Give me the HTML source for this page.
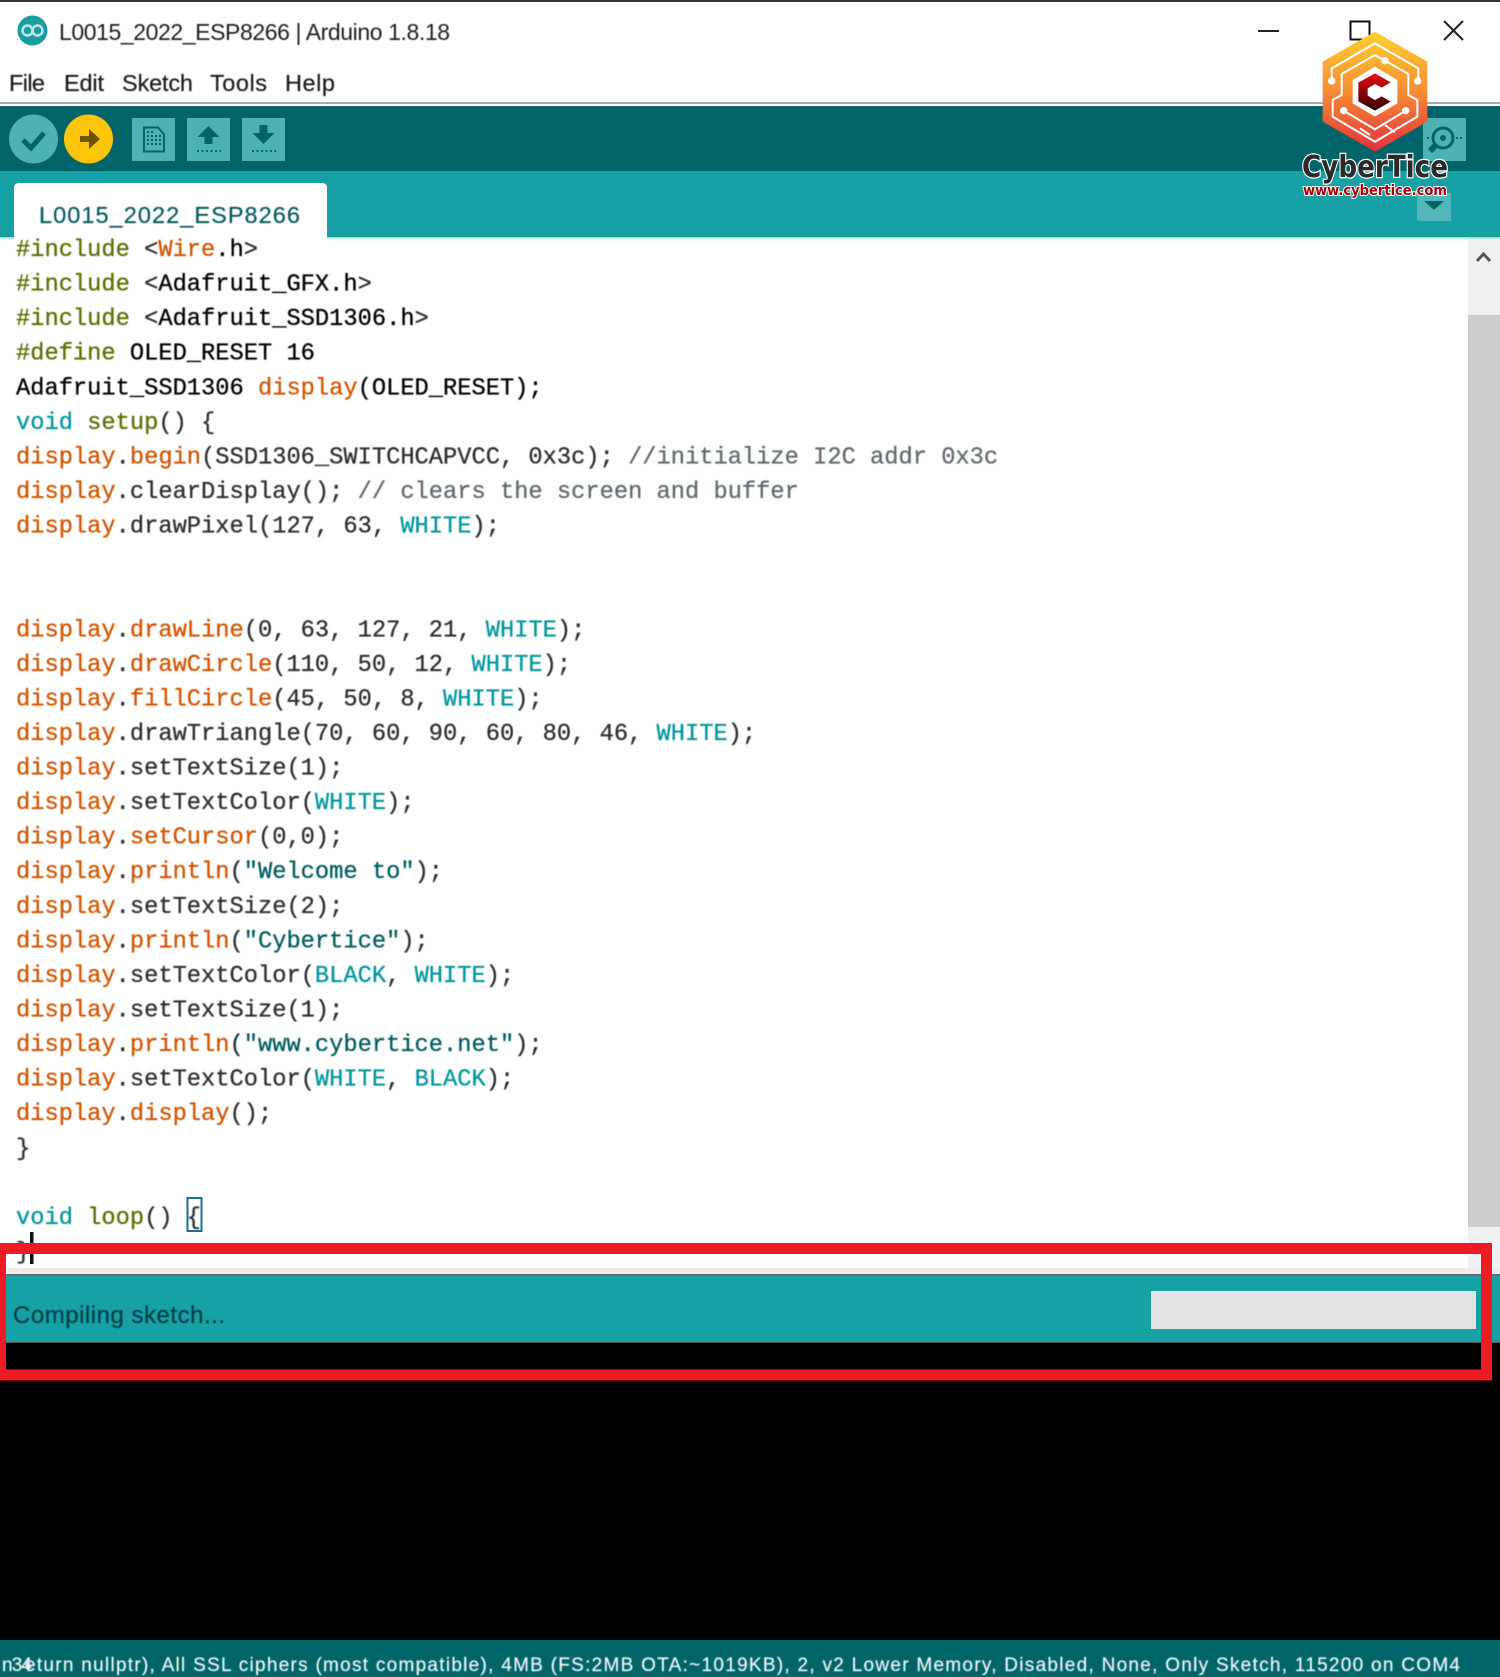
<!DOCTYPE html>
<html lang="en">
<head>
<meta charset="utf-8">
<title>L0015_2022_ESP8266 | Arduino 1.8.18</title>
<style>
html,body{margin:0;padding:0;background:#fff;width:1500px;height:1677px;overflow:hidden}
svg{display:block}
text{white-space:pre}
.s{font-family:"Liberation Sans",sans-serif}
.c{font-family:"Liberation Mono",monospace;font-size:23.72px;fill:#2b2f31;stroke:#2b2f31;stroke-width:.3px}
.o{fill:#d35400;stroke:#d35400}
.t{fill:#00979c;stroke:#00979c}
.g{fill:#5e6d03;stroke:#5e6d03}
.k{fill:#000;stroke:#000}
.q{fill:#005c5f;stroke:#005c5f}
.m{fill:#5f6b70;stroke:#5f6b70}
.soft{filter:blur(.45px)}
</style>
</head>
<body>
<svg width="1500" height="1677" viewBox="0 0 1500 1677" xmlns="http://www.w3.org/2000/svg">
<defs>
<linearGradient id="hex" x1="0" y1="0" x2="0" y2="1"><stop offset="0" stop-color="#fdd22f"/><stop offset=".5" stop-color="#f68c35"/><stop offset="1" stop-color="#e4303b"/></linearGradient>
<linearGradient id="cg" x1="0" y1="0" x2="0" y2="1"><stop offset="0" stop-color="#ee0a12"/><stop offset="1" stop-color="#2c0000"/></linearGradient>
</defs>

<rect width="1500" height="1677" fill="#fff"/>
<rect width="1500" height="2" fill="#333"/>

<!-- title bar -->
<circle cx="32.500" cy="30.500" r="15" fill="#1a9da1"/>
<g fill="none" stroke="#bfe6e7" stroke-width="2.500"><circle cx="27.500" cy="30.500" r="5"/><circle cx="37.500" cy="30.500" r="5"/></g>
<g class="soft">
<text class="s" x="59" y="40" font-size="23" fill="#1c1c1c" textLength="391" lengthAdjust="spacing">L0015_2022_ESP8266 | Arduino 1.8.18</text>
<g class="s" font-size="23.500" fill="#1a1a1a" stroke="#1a1a1a" stroke-width=".2">
<text x="9" y="91" textLength="36" lengthAdjust="spacing">File</text>
<text x="64" y="91" textLength="40" lengthAdjust="spacing">Edit</text>
<text x="122" y="91" textLength="71" lengthAdjust="spacing">Sketch</text>
<text x="210" y="91" textLength="57" lengthAdjust="spacing">Tools</text>
<text x="285" y="91" textLength="50" lengthAdjust="spacing">Help</text>
</g>
</g>
<rect x="1258" y="30" width="21" height="2" fill="#222"/>
<rect x="1350.500" y="21.500" width="19" height="18" fill="none" stroke="#111" stroke-width="2"/>
<path d="M1444 21L1463 40M1463 21L1444 40" stroke="#222" stroke-width="2" fill="none"/>

<rect y="102" width="1500" height="2" fill="#a9a9a9"/>
<rect y="106" width="1500" height="65" fill="#006468"/>
<rect y="171" width="1500" height="66" fill="#17a1a5"/>
<rect y="237" width="1500" height="1.500" fill="#9cd8da"/>

<!-- toolbar -->
<circle cx="33.500" cy="139" r="24.500" fill="#4db2b5"/>
<path d="M23 140L31 148L44 133" fill="none" stroke="#006468" stroke-width="5"/>
<circle cx="88.500" cy="139" r="24.500" fill="#fdc50c"/>
<path d="M80 136h9v-7l11 10l-11 10v-7h-9z" fill="#6b5500"/>
<g fill="#4db2b5">
<rect x="132" y="118" width="43" height="43"/>
<rect x="187" y="118" width="43" height="43"/>
<rect x="242" y="118" width="43" height="43"/>
<rect x="1423" y="118" width="43" height="43"/>
<rect x="1417" y="193" width="34" height="28" fill="#53b7ba"/>
</g>
<path d="M144 127.500h14l6 7v17h-20z" fill="none" stroke="#006468" stroke-width="2"/>
<g fill="#006468">
<rect x="147" y="131" width="2" height="2"/><rect x="151" y="131" width="2" height="2"/>
<rect x="147" y="135" width="2" height="2"/><rect x="151" y="135" width="2" height="2"/><rect x="155" y="135" width="2" height="2"/><rect x="159" y="135" width="2" height="2"/>
<rect x="147" y="139" width="2" height="2"/><rect x="151" y="139" width="2" height="2"/><rect x="155" y="139" width="2" height="2"/><rect x="159" y="139" width="2" height="2"/>
<rect x="147" y="143" width="2" height="2"/><rect x="151" y="143" width="2" height="2"/><rect x="155" y="143" width="2" height="2"/><rect x="159" y="143" width="2" height="2"/>
<path d="M208.500 126l11 11h-7v7h-8v-7h-7z"/>
<path d="M263.500 144l11-11h-7v-8h-8v8h-7z"/>
<path d="M1424 201h20l-10 9z"/>
<circle cx="1443" cy="138" r="3"/>
<rect x="1427" y="137" width="2" height="2"/>
<rect x="1456" y="137" width="2" height="2"/><rect x="1460" y="137" width="2" height="2"/>
</g>
<g stroke="#006468" stroke-width="2" stroke-dasharray="2 2.500" fill="none"><path d="M197 151h24M252 151h24"/></g>
<circle cx="1443" cy="138" r="10" fill="none" stroke="#006468" stroke-width="3"/>
<path d="M1436 145l-6 6" stroke="#006468" stroke-width="6" fill="none"/>

<!-- tab -->
<path d="M14 239V188q0-5 5-5h303q5 0 5 5v51z" fill="#fff"/>
<text class="s soft" x="39" y="223" font-size="23.500" fill="#05595d" stroke="#05595d" stroke-width=".2" textLength="261" lengthAdjust="spacing">L0015_2022_ESP8266</text>

<!-- scrollbar -->
<rect x="1468" y="239" width="32" height="1029" fill="#f0f0f0"/>
<rect x="1468" y="315" width="32" height="912" fill="#cdcdcd"/>
<path d="M1477 261l6.500-7 6.500 7" fill="none" stroke="#555" stroke-width="3"/>

<!-- code -->
<g class="soft">
<text class="c" x="16" y="256"><tspan class="g">#include</tspan> &lt;<tspan class="o">Wire</tspan><tspan class="k">.h</tspan>&gt;</text>
<text class="c" x="16" y="290.600"><tspan class="g">#include</tspan> &lt;<tspan class="k">Adafruit_GFX.h</tspan>&gt;</text>
<text class="c" x="16" y="325.100"><tspan class="g">#include</tspan> &lt;<tspan class="k">Adafruit_SSD1306.h</tspan>&gt;</text>
<text class="c" x="16" y="359.700"><tspan class="g">#define</tspan> <tspan class="k">OLED_RESET 16</tspan></text>
<text class="c" x="16" y="394.300"><tspan class="k">Adafruit_SSD1306 </tspan><tspan class="o">display</tspan><tspan class="k">(OLED_RESET);</tspan></text>
<text class="c" x="16" y="428.800"><tspan class="t">void</tspan> <tspan class="g">setup</tspan>() {</text>
<text class="c" x="16" y="463.400"><tspan class="o">display</tspan>.<tspan class="o">begin</tspan>(SSD1306_SWITCHCAPVCC, 0x3c); <tspan class="m">//initialize I2C addr 0x3c</tspan></text>
<text class="c" x="16" y="498"><tspan class="o">display</tspan>.clearDisplay(); <tspan class="m">// clears the screen and buffer</tspan></text>
<text class="c" x="16" y="532.600"><tspan class="o">display</tspan>.drawPixel(127, 63, <tspan class="t">WHITE</tspan>);</text>
<text class="c" x="16" y="636.300"><tspan class="o">display</tspan>.<tspan class="o">drawLine</tspan>(0, 63, 127, 21, <tspan class="t">WHITE</tspan>);</text>
<text class="c" x="16" y="670.800"><tspan class="o">display</tspan>.<tspan class="o">drawCircle</tspan>(110, 50, 12, <tspan class="t">WHITE</tspan>);</text>
<text class="c" x="16" y="705.400"><tspan class="o">display</tspan>.<tspan class="o">fillCircle</tspan>(45, 50, 8, <tspan class="t">WHITE</tspan>);</text>
<text class="c" x="16" y="740"><tspan class="o">display</tspan>.drawTriangle(70, 60, 90, 60, 80, 46, <tspan class="t">WHITE</tspan>);</text>
<text class="c" x="16" y="774.500"><tspan class="o">display</tspan>.setTextSize(1);</text>
<text class="c" x="16" y="809.100"><tspan class="o">display</tspan>.setTextColor(<tspan class="t">WHITE</tspan>);</text>
<text class="c" x="16" y="843.700"><tspan class="o">display</tspan>.<tspan class="o">setCursor</tspan>(0,0);</text>
<text class="c" x="16" y="878.200"><tspan class="o">display</tspan>.<tspan class="o">println</tspan>(<tspan class="q">"Welcome to"</tspan>);</text>
<text class="c" x="16" y="912.800"><tspan class="o">display</tspan>.setTextSize(2);</text>
<text class="c" x="16" y="947.400"><tspan class="o">display</tspan>.<tspan class="o">println</tspan>(<tspan class="q">"Cybertice"</tspan>);</text>
<text class="c" x="16" y="982"><tspan class="o">display</tspan>.setTextColor(<tspan class="t">BLACK</tspan>, <tspan class="t">WHITE</tspan>);</text>
<text class="c" x="16" y="1016.500"><tspan class="o">display</tspan>.setTextSize(1);</text>
<text class="c" x="16" y="1051.100"><tspan class="o">display</tspan>.<tspan class="o">println</tspan>(<tspan class="q">"www.cybertice.net"</tspan>);</text>
<text class="c" x="16" y="1085.700"><tspan class="o">display</tspan>.setTextColor(<tspan class="t">WHITE</tspan>, <tspan class="t">BLACK</tspan>);</text>
<text class="c" x="16" y="1120.200"><tspan class="o">display</tspan>.<tspan class="o">display</tspan>();</text>
<text class="c" x="16" y="1154.800">}</text>
<text class="c" x="16" y="1224"><tspan class="t">void</tspan> <tspan class="g">loop</tspan>() {</text>
<text class="c" x="16" y="1258.500">}</text>
</g>
<rect x="187.500" y="1198" width="14" height="33" fill="none" stroke="#1d6d8c" stroke-width="2"/>
<rect x="30" y="1232" width="3.500" height="32" fill="#111"/>

<!-- status -->
<rect y="1268" width="1500" height="6" fill="#ececec"/>
<rect y="1274" width="1500" height="2" fill="#6a6a6a"/>
<rect y="1276" width="1500" height="67" fill="#17a1a5"/>
<rect y="1343" width="1500" height="297" fill="#000"/>
<rect y="1342" width="1500" height="1" fill="#555"/>
<text class="s soft" x="13" y="1323" font-size="24" fill="#043f4a" stroke="#043f4a" stroke-width=".3" textLength="212" lengthAdjust="spacing">Compiling sketch...</text>
<rect x="1151" y="1291" width="325" height="38" fill="#e3e3e3"/>

<!-- red highlight -->
<path d="M-10 1248.500H1486.500V1375H-10" fill="none" stroke="#ed1c24" stroke-width="11"/>
<rect x="0" y="1243" width="6" height="137" fill="#ed1c24"/>

<!-- bottom bar -->
<rect y="1640" width="1500" height="37" fill="#006468"/>
<g class="s soft" font-size="19" fill="#eef7f7" stroke="#eef7f7" stroke-width=".2">
<text x="2" y="1671" textLength="30" lengthAdjust="spacing">n34</text>
<text x="25" y="1671" textLength="1435" lengthAdjust="spacing">eturn nullptr), All SSL ciphers (most compatible), 4MB (FS:2MB OTA:~1019KB), 2, v2 Lower Memory, Disabled, None, Only Sketch, 115200 on COM4</text>
</g>

<!-- logo -->
<g transform="translate(1200 0) scale(.33333)">
<polygon points="525,95 682,185 682,365 525,455 368,365 368,185" fill="url(#hex)"/>
<g fill="none" stroke="#fff" stroke-width="6">
<path d="M395 243V205L525 130L655 205V243"/>
<path d="M555 182L525 165L425 222V285L398 300V350L525 425L652 350V300L625 285V222Z"/>
<path d="M430 332L525 388L617 332"/>
<path d="M480 385L510 405M555 375L585 397"/>
</g>
<g fill="#fff">
<circle cx="395" cy="243" r="11"/><circle cx="653" cy="243" r="11"/><circle cx="555" cy="182" r="11"/><circle cx="431" cy="332" r="11"/><circle cx="617" cy="332" r="11"/>
<polygon points="525,200 592,240 592,310 525,350 458,310 458,240"/>
</g>
<path d="M525 220L572 247L545 263L525 252L503 265V287L525 300L545 289L572 305L525 332L475 304V248Z" fill="url(#cg)"/>
</g>
<text x="1302" y="177" font-family="'DejaVu Sans',sans-serif" font-size="30" font-weight="bold" fill="#2a2a2a" stroke="#fff" stroke-width="2.500" paint-order="stroke" textLength="146" lengthAdjust="spacingAndGlyphs">CyberTice</text>
<text x="1303" y="195" font-family="'DejaVu Sans',sans-serif" font-size="14" font-weight="bold" fill="#a5040c" stroke="#fff" stroke-width="2" paint-order="stroke" textLength="144" lengthAdjust="spacingAndGlyphs">www.cybertice.com</text>
</svg>
</body>
</html>
